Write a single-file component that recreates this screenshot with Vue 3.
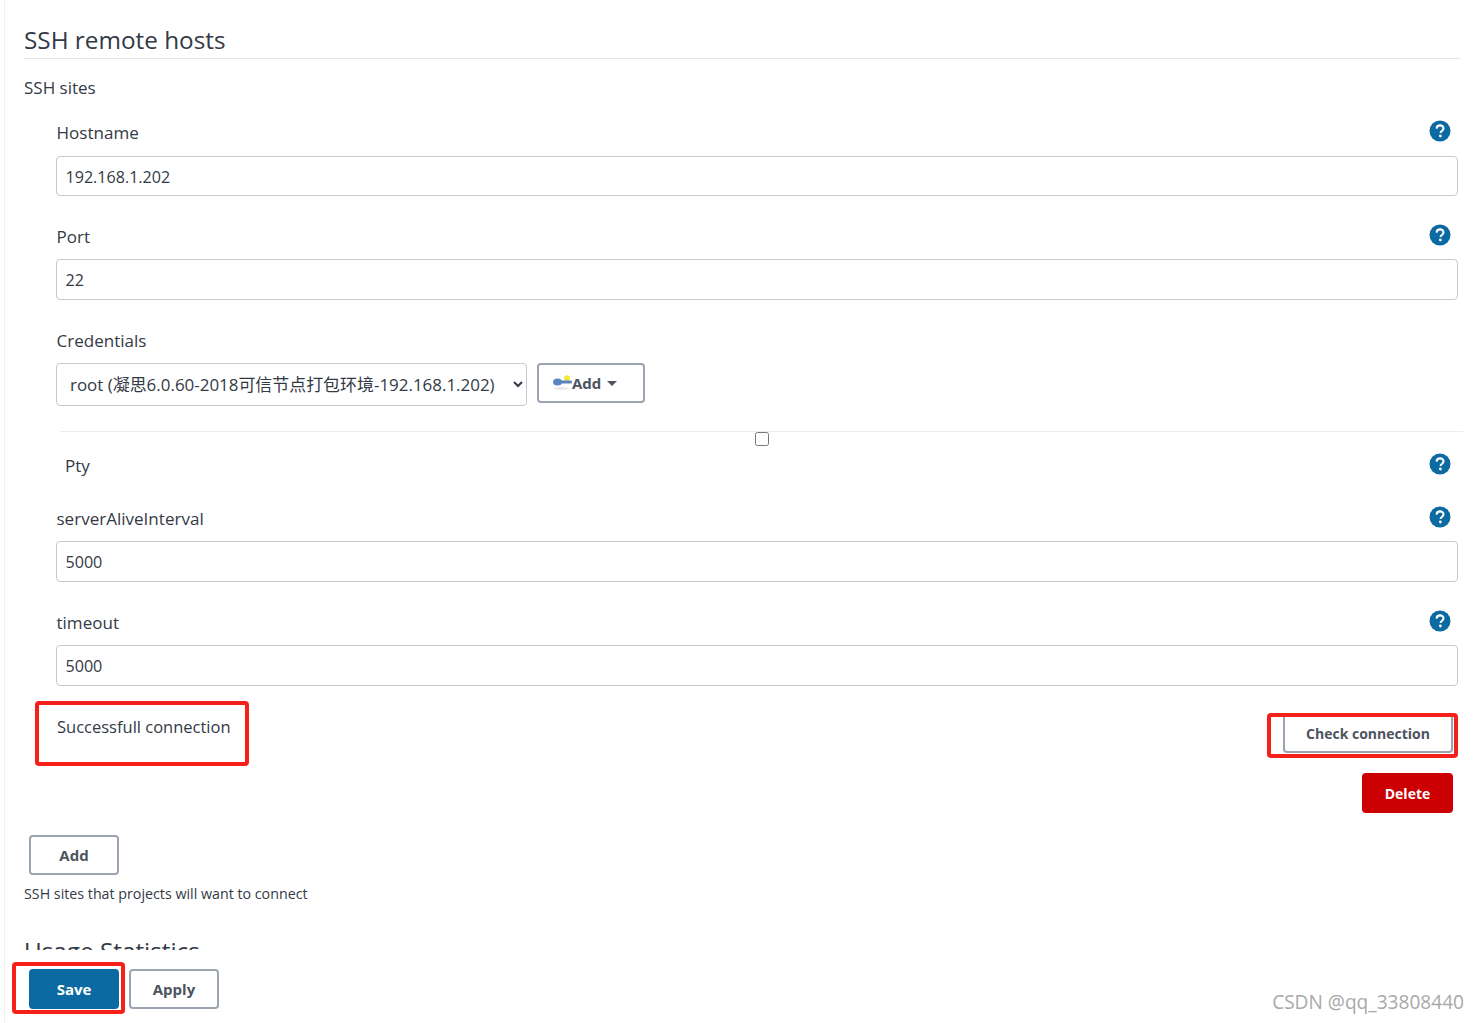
<script setup>
const top = [
  { label: 'Hostname', value: '192.168.1.202' },
  { label: 'Port', value: '22' },
]
const bottom = [
  { label: 'serverAliveInterval', value: '5000' },
  { label: 'timeout', value: '5000' },
]
</script>

<template>
  <div class="page">
    <main class="main">
      <h2 class="title">SSH remote hosts</h2>
      <div class="sites">SSH sites</div>
      <section class="repeat">
        <div v-for="(f, i) in top" :key="f.label" class="field">
          <div class="label-row" :class="{ low: i > 0 }">
            <span>{{ f.label }}</span>
            <svg class="help" viewBox="0 0 22 22"><circle cx="11" cy="11" r="10.5" fill="#0b6aa2"/><path d="M7.6 8.6C7.7 6.6 9.1 5.4 11.1 5.4c2 0 3.4 1.2 3.4 2.9 0 1.3-.7 2-1.7 2.7-.9.6-1.2 1-1.2 1.9" fill="none" stroke="#fff" stroke-width="2.1"/><circle cx="11.4" cy="16" r="1.4" fill="#fff"/></svg>
          </div>
          <input class="input" :class="{ tall: i > 0 }" type="text" :value="f.value" />
        </div>

        <div class="label-row cred-label"><span>Credentials</span></div>
        <div class="cred">
          <select class="select">
            <option>root (凝思6.0.60-2018可信节点打包环境-192.168.1.202)</option>
          </select>
          <button class="btn add-cred">
            <svg class="key" viewBox="0 0 19 16"><circle cx="14" cy="3.2" r="3" fill="#f5e63f"/><ellipse cx="4.5" cy="7" rx="4.5" ry="3.6" fill="#5a86c0"/><rect x="6" y="5.4" width="13" height="3.2" rx="1" fill="#5a86c0"/><ellipse cx="8" cy="13.5" rx="8" ry="1.2" fill="#e4e6ea"/></svg>
            <span>Add</span><i class="caret"></i>
          </button>
        </div>

        <div class="pty-block">
          <input class="check" type="checkbox" />
          <div class="label-row pty">
            <span>Pty</span>
            <svg class="help" viewBox="0 0 22 22"><circle cx="11" cy="11" r="10.5" fill="#0b6aa2"/><path d="M7.6 8.6C7.7 6.6 9.1 5.4 11.1 5.4c2 0 3.4 1.2 3.4 2.9 0 1.3-.7 2-1.7 2.7-.9.6-1.2 1-1.2 1.9" fill="none" stroke="#fff" stroke-width="2.1"/><circle cx="11.4" cy="16" r="1.4" fill="#fff"/></svg>
          </div>
        </div>

        <div v-for="f in bottom" :key="f.label" class="field">
          <div class="label-row low">
            <span>{{ f.label }}</span>
            <svg class="help" viewBox="0 0 22 22"><circle cx="11" cy="11" r="10.5" fill="#0b6aa2"/><path d="M7.6 8.6C7.7 6.6 9.1 5.4 11.1 5.4c2 0 3.4 1.2 3.4 2.9 0 1.3-.7 2-1.7 2.7-.9.6-1.2 1-1.2 1.9" fill="none" stroke="#fff" stroke-width="2.1"/><circle cx="11.4" cy="16" r="1.4" fill="#fff"/></svg>
          </div>
          <input class="input tall" type="text" :value="f.value" />
        </div>

        <div class="check-row">
          <span class="success">Successfull connection</span>
          <button class="btn small check-btn">Check connection</button>
        </div>
        <div class="delete-row"><button class="btn small danger">Delete</button></div>
      </section>

      <button class="btn add-site">Add</button>
      <p class="hint">SSH sites that projects will want to connect</p>
      <h2 class="usage">Usage Statistics</h2>
    </main>

    <footer class="bar">
      <button class="btn primary">Save</button>
      <button class="btn apply">Apply</button>
    </footer>

    <div class="mark mark-success"></div>
    <div class="mark mark-check"></div>
    <div class="mark mark-save"></div>
    <div class="watermark">CSDN @qq_33808440</div>
  </div>
</template>

<style>
html, body { margin: 0; background: #fff; }
</style>

<style scoped>
.page {
  position: relative;
  width: 1479px;
  height: 1023px;
  overflow: hidden;
  display: flex;
  flex-direction: column;
  background: #fff;
  color: #333a46;
  font-family: "Open Sans", "Noto Sans CJK SC", sans-serif;
  font-size: 17px;
}
.page::before {
  content: "";
  position: absolute;
  left: 4px;
  top: 0;
  bottom: 0;
  width: 1px;
  background: #edf1f4;
}
.main {
  height: 950px;
  overflow: hidden;
  padding: 0 19px 0 24px;
  flex: none;
  box-sizing: border-box;
}
.title {
  margin: 24px 0 0;
  line-height: 32px;
  font-size: 24.3px;
  font-weight: 500;
  border-bottom: 1px solid #e3e6ea;
  height: 34px;
}
.sites {
  margin-top: 16px;
  height: 28px;
  line-height: 26px;
  font-weight: 500;
}
.repeat { padding: 18px 2px 0 32px; }
.label-row {
  display: flex;
  justify-content: space-between;
  align-items: center;
  height: 22px;
  padding: 0 7px 0 0.5px;
  margin-bottom: 13px;
  font-size: 17.05px;
  font-weight: 500;
}
.label-row.low { height: 24px; margin-bottom: 11px; }
.help { width: 22px; height: 22px; flex: none; margin-top: -2px; }
.field { margin-bottom: 28px; }
.input {
  display: block;
  width: 100%;
  height: 40px;
  box-sizing: border-box;
  border: 1px solid #c6c9cd;
  border-radius: 4px;
  padding: 1px 8.5px 0;
  font: inherit;
  font-size: 16.1px;
  color: #333a46;
  outline: none;
  background: #fff;
}
.input.tall { height: 41px; }
.cred-label { height: 24px; margin: 2px 0 11px; }
.cred { display: flex; gap: 10px; align-items: flex-start; }
.select {
  width: 471px;
  height: 43px;
  box-sizing: border-box;
  border: 1px solid #c6c9cd;
  border-radius: 4px;
  padding: 0 9px;
  font: inherit;
  font-size: 16.95px;
  color: #333a46;
  background: #fff;
}
.btn {
  box-sizing: border-box;
  height: 40px;
  border: 2px solid #9aa5b1;
  border-radius: 4px;
  background: #fff;
  color: #4d545d;
  font: 700 15px "Open Sans", sans-serif;
  padding: 0;
  cursor: pointer;
}
.small { font-size: 14px; }
.add-cred {
  width: 108px;
  display: flex;
  align-items: center;
  justify-content: flex-start;
  padding-left: 14px;
}
.key { width: 19px; height: 16px; flex: none; }
.caret {
  margin-left: 6px;
  border: 5px solid transparent;
  border-top-color: #4d545d;
  border-bottom: 0;
}
.pty-block {
  position: relative;
  margin: 25px -5px 0 4px;
  border-top: 1px solid #e9ebee;
  height: 74px;
}
.check {
  position: absolute;
  left: 695px;
  top: 0;
  width: 14px;
  height: 14px;
  margin: 0;
}
.pty {
  padding: 22px 12px 0 5px;
}
.check-row {
  display: flex;
  justify-content: space-between;
  align-items: flex-start;
  height: 60px;
  padding-right: 5px;
  margin-top: -1px;
}
.success { margin: 2px 0 0 1px; font-size: 16.5px; }
.check-btn { width: 170px; }
.delete-row { display: flex; justify-content: flex-end; padding-right: 5px; }
.danger {
  width: 91px;
  background: #cc0003;
  border-color: #cc0003;
  color: #fff;
}
.add-site { width: 90px; margin: 22px 0 0 5px; display: block; }
.hint { margin: 9px 0 0; font-size: 14.25px; line-height: 20px; }
.usage {
  margin: 31px 0 0;
  font-size: 24.3px;
  font-weight: 500;
  line-height: 32px;
}
.bar {
  display: flex;
  gap: 10px;
  padding: 19px 0 0 29px;
}
.primary {
  width: 90px;
  background: #0b6aa2;
  border-color: #0b6aa2;
  color: #fff;
}
.apply { width: 90px; }
.mark {
  position: absolute;
  box-sizing: border-box;
  border: 4px solid #f5201a;
  border-radius: 4px;
  pointer-events: none;
}
.mark-success { left: 35px; top: 701px; width: 214px; height: 65px; }
.mark-check { left: 1267px; top: 713px; width: 191px; height: 45px; }
.mark-save { left: 12px; top: 962px; width: 113px; height: 52px; }
.watermark {
  position: absolute;
  right: 15px;
  top: 988px;
  font-size: 19.1px;
  line-height: 28px;
  color: #a9a9a9;
}
</style>
